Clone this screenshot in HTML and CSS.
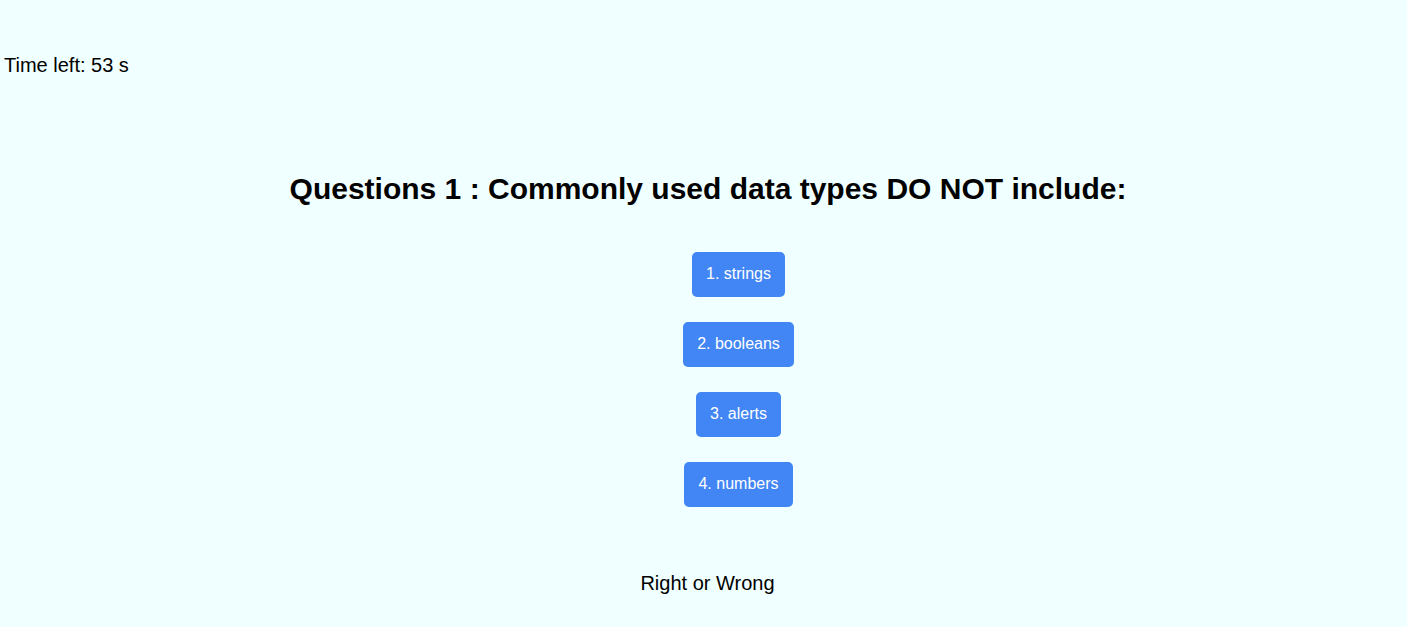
FILE: index.html
```html
<!DOCTYPE html>
<html lang="en">
<head>
<meta charset="utf-8">
<title>Quiz</title>
<link rel="stylesheet" href="styles.css">
</head>
<body>
<p class="timer">Time left: 53 s</p>
<h1 class="question">Questions 1 : Commonly used data types DO NOT include:</h1>
<div class="choices">
  <button class="choice">1. strings</button>
  <button class="choice">2. booleans</button>
  <button class="choice">3. alerts</button>
  <button class="choice">4. numbers</button>
</div>
<p class="result">Right or Wrong</p>
</body>
</html>
```
FILE: styles.css
```css
html, body {
  margin: 0;
  padding: 0;
  background: #f0ffff;
  font-family: "Liberation Sans", Arial, sans-serif;
  color: #000;
}
.timer {
  margin: 54px 0 0 4px;
  font-size: 20px;
  line-height: 23px;
}
.question {
  margin: 95px 0 0 0;
  padding-left: 9px;
  font-size: 30px;
  line-height: 34px;
  font-weight: bold;
  text-align: center;
}
.choices {
  display: flex;
  flex-direction: column;
  align-items: center;
  gap: 25px;
  margin-top: 46px;
  padding-left: 70px;
}
.choice {
  height: 45px;
  padding: 0 14px 2px;
  border: none;
  border-radius: 5px;
  background: #4285f4;
  color: #fff;
  font-family: "Liberation Sans", Arial, sans-serif;
  font-size: 16px;
  line-height: 18px;
}
.result {
  margin: 65px 0 0 0;
  padding-left: 8px;
  font-size: 20px;
  line-height: 23px;
  text-align: center;
}
```
